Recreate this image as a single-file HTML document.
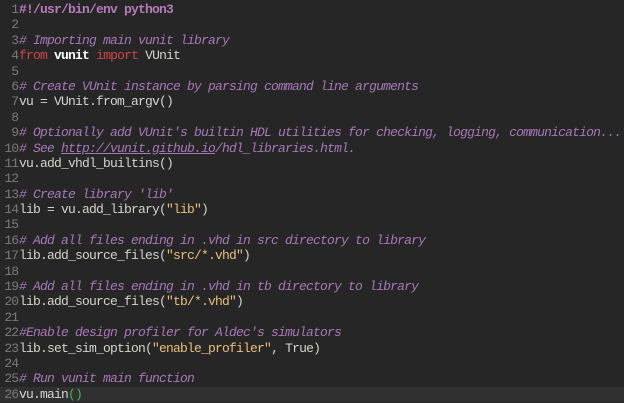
<!DOCTYPE html>
<html><head><meta charset="utf-8"><style>
html,body{margin:0;padding:0;background:#262626;width:624px;height:403px;overflow:hidden}
.c{position:absolute;left:0;top:2px;width:624px;font-family:"Liberation Mono",monospace;font-size:13px;letter-spacing:-0.8px;color:#d4d4cc}
.l{height:15.4px;line-height:15.4px;white-space:pre;position:relative}
.n{display:inline-block;width:18px;text-align:right;color:#7a7a7a;margin-right:1px;letter-spacing:-1px}
.cm{color:#a778b8;font-style:italic}
.k{color:#d2434f}
.b{color:#fff;font-weight:bold}
.s{color:#e6c07b}
.sh{color:#b57ab8;font-weight:bold}
.u{text-decoration:underline}
.g{color:#3fb950}
.hl{background:#303030}
</style></head><body><div class="c">
<div class="l"><span class="n">1</span><span class="sh">#!/usr/bin/env python3</span></div>
<div class="l"><span class="n">2</span></div>
<div class="l"><span class="n">3</span><span class="cm"># Importing main vunit library</span></div>
<div class="l"><span class="n">4</span><span class="k">from</span> <span class="b">vunit</span> <span class="k">import</span> VUnit</div>
<div class="l"><span class="n">5</span></div>
<div class="l"><span class="n">6</span><span class="cm"># Create VUnit instance by parsing command line arguments</span></div>
<div class="l"><span class="n">7</span>vu = VUnit.from_argv()</div>
<div class="l"><span class="n">8</span></div>
<div class="l"><span class="n">9</span><span class="cm"># Optionally add VUnit's builtin HDL utilities for checking, logging, communication...</span></div>
<div class="l"><span class="n">10</span><span class="cm"># See <span class="u">http://vunit.github.io</span>/hdl_libraries.html.</span></div>
<div class="l"><span class="n">11</span>vu.add_vhdl_builtins()</div>
<div class="l"><span class="n">12</span></div>
<div class="l"><span class="n">13</span><span class="cm"># Create library 'lib'</span></div>
<div class="l"><span class="n">14</span>lib = vu.add_library(<span class="s">"lib"</span>)</div>
<div class="l"><span class="n">15</span></div>
<div class="l"><span class="n">16</span><span class="cm"># Add all files ending in .vhd in src directory to library</span></div>
<div class="l"><span class="n">17</span>lib.add_source_files(<span class="s">"src/*.vhd"</span>)</div>
<div class="l"><span class="n">18</span></div>
<div class="l"><span class="n">19</span><span class="cm"># Add all files ending in .vhd in tb directory to library</span></div>
<div class="l"><span class="n">20</span>lib.add_source_files(<span class="s">"tb/*.vhd"</span>)</div>
<div class="l"><span class="n">21</span></div>
<div class="l"><span class="n">22</span><span class="cm">#Enable design profiler for Aldec's simulators</span></div>
<div class="l"><span class="n">23</span>lib.set_sim_option(<span class="s">"enable_profiler"</span>, True)</div>
<div class="l"><span class="n">24</span></div>
<div class="l"><span class="n">25</span><span class="cm"># Run vunit main function</span></div>
<div class="l hl"><span class="n">26</span>vu.main<span class="g">()</span></div>
</div></body></html>
